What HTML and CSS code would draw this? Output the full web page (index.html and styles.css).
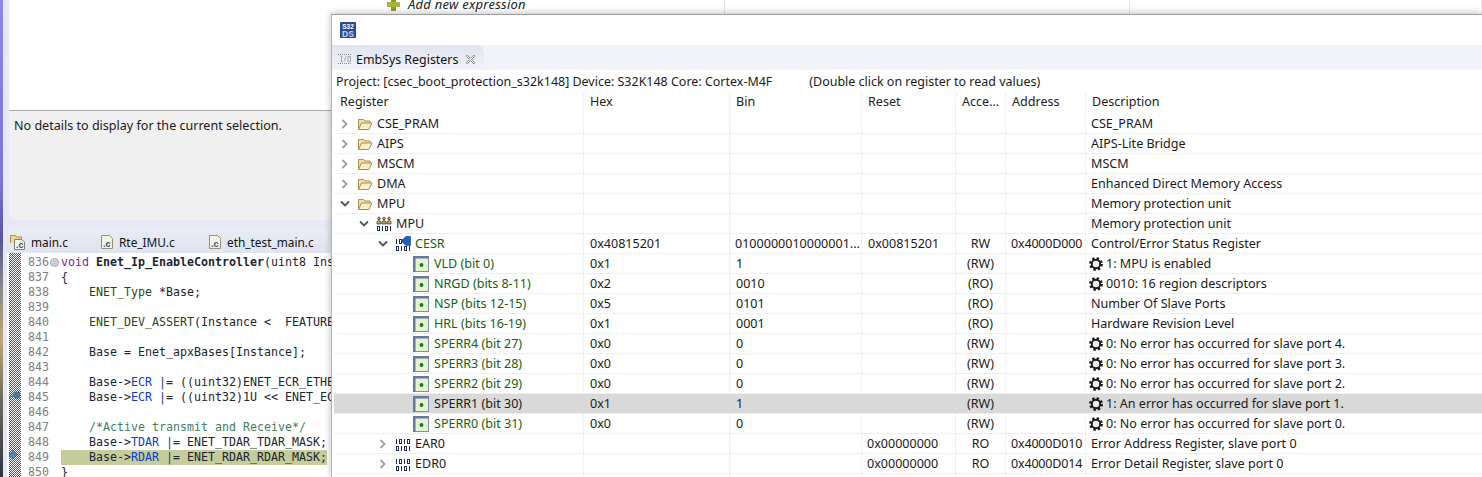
FILE: index.html
```html
<!DOCTYPE html>
<html lang="en">
<head>
<meta charset="utf-8">
<title>EmbSys Registers</title>
<link rel="stylesheet" href="styles.css">
</head>
<body>
<svg class="defs" width="0" height="0" aria-hidden="true">
  <defs>
    <symbol id="folder" viewBox="0 0 16 16">
      <path d="M1.500 13.500V3.500h5l1.500 1.500h5v2" fill="#f3dfa4" stroke="#a98f50"/>
      <path d="M1.500 13.500l3-6.500h10.500l-3 6.500z" fill="#fcefc4" stroke="#a98f50"/>
    </symbol>
    <symbol id="bits" viewBox="0 0 16 16">
      <g fill="#1c2c58">
        <path d="M1 3h1v5H1zM4 3h3v5H4zM5 4v3h1V4zM9 3h1v5H9zM12 3h3v5h-3zM13 4v3h1V4z" fill-rule="evenodd"/>
        <path d="M1 10h3v5H1zM2 11v3h1v-3zM6 10h1v5H6zM9 10h3v5H9zM10 11v3h1v-3zM14 10h1v5h-1z" fill-rule="evenodd"/>
      </g>
    </symbol>
    <symbol id="bits-people" viewBox="0 0 16 16">
      <g fill="#c8a83c" stroke="#1c2c58" stroke-width=".7">
        <circle cx="3" cy="2.500" r="1.300"/><circle cx="8" cy="2.500" r="1.300"/><circle cx="13" cy="2.500" r="1.300"/>
        <path d="M1 8V5.500l2-1 2 1V8zM6 8V5.500l2-1 2 1V8zM11 8V5.500l2-1 2 1V8z"/>
      </g>
      <path d="M1 10h3v5H1zM2 11v3h1v-3zM6 10h1v5H6zM9 10h3v5H9zM10 11v3h1v-3zM14 10h1v5h-1z" fill="#1c2c58" fill-rule="evenodd"/>
    </symbol>
    <symbol id="bits-arrow" viewBox="0 0 16 16">
      <path d="M1 3h1v5H1zM4 3h3v5H4zM5 4v3h1V4z" fill="#1c2c58" fill-rule="evenodd"/>
      <path d="M1 10h3v5H1zM2 11v3h1v-3zM6 10h1v5H6zM9 10h3v5H9zM10 11v3h1v-3zM14 10h1v5h-1z" fill="#1c2c58" fill-rule="evenodd"/>
      <path d="M6 5l5-4.500h4.500v9H11z" fill="#1f5fc0" stroke="#123c88" stroke-width=".6"/>
    </symbol>
    <symbol id="field" viewBox="0 0 16 16">
      <rect x=".5" y=".5" width="15" height="15" fill="#e6f0d2" stroke="#7d8db0"/>
      <path d="M0 0h16v2.500H2.500V16H0z" fill="#66789f"/>
      <circle cx="8.500" cy="9" r="1.900" fill="#0f7a1e"/>
    </symbol>
    <symbol id="gear" viewBox="0 0 14 14">
      <circle cx="7" cy="7" r="5.400" fill="none" stroke="#1a1a1a" stroke-width="3" stroke-dasharray="2.200 2.040"/>
      <circle cx="7" cy="7" r="4.200" fill="none" stroke="#1a1a1a" stroke-width="1.900"/>
      <circle cx="7" cy="7" r="2.900" fill="#ececec"/>
    </symbol>
    <symbol id="cfile" viewBox="0 0 14 16">
      <path d="M1.500 1.500h8l3 3v10h-11z" fill="#f7f3e2" stroke="#9a8f70"/>
      <text x="3" y="12.500" class="cfile-text">.c</text>
    </symbol>
    <symbol id="cfile-open" viewBox="0 0 15 16">
      <path d="M.5 9V1.500h5l1 1.500h5v3" fill="#f0d78c" stroke="#a98f50"/>
      <path d="M4.500 5.500h7l3 2.500v7.500h-10z" fill="#f7f3e2" stroke="#7f7f70"/>
      <text x="6" y="13.500" class="cfile-text">.c</text>
    </symbol>
    <symbol id="chev-r" viewBox="0 0 8 10"><path d="M1.500 1l4 4-4 4" fill="none" stroke="#a0a0a0" stroke-width="1.800"/></symbol>
    <symbol id="chev-d" viewBox="0 0 10 8"><path d="M1 1.500l4 4 4-4" fill="none" stroke="#555" stroke-width="1.800"/></symbol>
  </defs>
</svg>

<div class="desktop">
  <div class="wallpaper"></div>
  <div class="ide-left">
    <div class="blank-pane"></div>
    <div class="details-pane">No details to display for the current selection.</div>
    <div class="editor">
      <div class="editor-tabs">
        <span class="etab etab-main"><svg class="ico-main"><use href="#cfile-open"/></svg>main.c</span>
        <span class="etab etab-rte"><svg class="ico-file"><use href="#cfile"/></svg>Rte_IMU.c</span>
        <span class="etab"><svg class="ico-file"><use href="#cfile"/></svg>eth_test_main.c</span>
      </div>
      <div class="editor-body">
        <div class="ruler">
          <svg class="mark mark-845" viewBox="0 0 12 10"><path d="M0 8l4-3 2-3h4l1 3-1 3H6L4 6z" fill="#4a78a8" stroke="#2d5580" stroke-width=".6"/></svg>
          <svg class="mark mark-849" viewBox="0 0 8 10"><path d="M0 3h3.500V.5L8 5 3.500 9.500V7H0z" fill="#4c86c8" stroke="#29568a" stroke-width=".6"/></svg>
        </div>
        <div class="lines">
          <div class="ln"><span class="no">836</span><span class="fold"></span><span class="code"><span class="kw">void</span> <b>Enet_Ip_EnableController</b>(uint8 Instance)</span></div>
          <div class="ln"><span class="no">837</span><span class="fold-off"></span><span class="code">{</span></div>
          <div class="ln"><span class="no">838</span><span class="fold-off"></span><span class="code">    <span class="ty">ENET_Type</span> *Base;</span></div>
          <div class="ln"><span class="no">839</span><span class="fold-off"></span><span class="code"></span></div>
          <div class="ln"><span class="no">840</span><span class="fold-off"></span><span class="code">    <span class="ty">ENET_DEV_ASSERT</span>(Instance &lt;  FEATURE_ENET_COUNT);</span></div>
          <div class="ln"><span class="no">841</span><span class="fold-off"></span><span class="code"></span></div>
          <div class="ln"><span class="no">842</span><span class="fold-off"></span><span class="code">    Base = Enet_apxBases[Instance];</span></div>
          <div class="ln"><span class="no">843</span><span class="fold-off"></span><span class="code"></span></div>
          <div class="ln"><span class="no">844</span><span class="fold-off"></span><span class="code">    Base-&gt;<span class="mem">ECR</span> <span class="bar">|</span>= ((uint32)ENET_ECR_ETHEREN_MASK);</span></div>
          <div class="ln"><span class="no">845</span><span class="fold-off"></span><span class="code">    Base-&gt;<span class="mem">ECR</span> <span class="bar">|</span>= ((uint32)1U &lt;&lt; ENET_ECR_DBSWP_SHIFT);</span></div>
          <div class="ln"><span class="no">846</span><span class="fold-off"></span><span class="code"></span></div>
          <div class="ln"><span class="no">847</span><span class="fold-off"></span><span class="code">    <span class="cm">/*Active transmit and Receive*/</span></span></div>
          <div class="ln"><span class="no">848</span><span class="fold-off"></span><span class="code">    Base-&gt;<span class="mem">TDAR</span> <span class="bar">|</span>= ENET_TDAR_TDAR_MASK;</span></div>
          <div class="ln"><span class="no">849</span><span class="fold-off"></span><span class="code code-hit">    Base-&gt;<span class="mem">RDAR</span> <span class="bar">|</span>= ENET_RDAR_RDAR_MASK;</span></div>
          <div class="ln"><span class="no">850</span><span class="fold-off"></span><span class="code">}</span></div>
        </div>
      </div>
    </div>
  </div>
  <div class="ide-right">
    <div class="expr-row">
      <div class="expr-cell expr-name"><span class="expr-plus"></span><em>Add new expression</em></div>
      <div class="expr-cell expr-mid"></div>
      <div class="expr-cell"></div>
    </div>
  </div>

  <section class="window">
    <div class="win-title">
      <svg class="s32" viewBox="0 0 16 16"><rect width="16" height="16" rx="1" fill="#2d4b95"/><text x="8" y="7" class="s32-a">S32</text><text x="8" y="14.500" class="s32-b">DS</text></svg>
    </div>
    <div class="tabbar">
      <div class="tab">
        <svg class="tab-ico" viewBox="0 0 14 10"><path d="M0 .5h14M0 9.500h14" stroke="#888" stroke-dasharray="1 1"/><path d="M2.500 2.500h2M3.500 2.500v5M2.500 7.500h2M6 7.500L8 2.500M10 2.500h2.500v5H10z" fill="none" stroke="#aaa"/></svg>
        <span>EmbSys Registers</span>
        <svg class="tab-x" viewBox="0 0 10 10"><path d="M1 2l1-1 3 3 3-3 1 1-3 3 3 3-1 1-3-3-3 3-1-1 3-3z" fill="#fff" stroke="#777" stroke-width=".8"/></svg>
      </div>
    </div>
    <div class="project"><span>Project: [csec_boot_protection_s32k148] Device: S32K148 Core: Cortex-M4F</span><span>(Double click on register to read values)</span></div>

    <div class="table">
      <div class="tr thead"><div>Register</div><div>Hex</div><div>Bin</div><div>Reset</div><div>Acce...</div><div>Address</div><div>Description</div></div>

      <div class="tr"><div class="tree d0"><svg class="chev"><use href="#chev-r"/></svg><svg class="ico"><use href="#folder"/></svg>CSE_PRAM</div><div></div><div></div><div></div><div></div><div></div><div>CSE_PRAM</div></div>
      <div class="tr"><div class="tree d0"><svg class="chev"><use href="#chev-r"/></svg><svg class="ico"><use href="#folder"/></svg>AIPS</div><div></div><div></div><div></div><div></div><div></div><div>AIPS-Lite Bridge</div></div>
      <div class="tr"><div class="tree d0"><svg class="chev"><use href="#chev-r"/></svg><svg class="ico"><use href="#folder"/></svg>MSCM</div><div></div><div></div><div></div><div></div><div></div><div>MSCM</div></div>
      <div class="tr"><div class="tree d0"><svg class="chev"><use href="#chev-r"/></svg><svg class="ico"><use href="#folder"/></svg>DMA</div><div></div><div></div><div></div><div></div><div></div><div>Enhanced Direct Memory Access</div></div>
      <div class="tr"><div class="tree d0"><svg class="chev"><use href="#chev-d"/></svg><svg class="ico"><use href="#folder"/></svg>MPU</div><div></div><div></div><div></div><div></div><div></div><div>Memory protection unit</div></div>
      <div class="tr"><div class="tree d1"><svg class="chev"><use href="#chev-d"/></svg><svg class="ico"><use href="#bits-people"/></svg>MPU</div><div></div><div></div><div></div><div></div><div></div><div>Memory protection unit</div></div>
      <div class="tr"><div class="tree d2 reg"><svg class="chev"><use href="#chev-d"/></svg><svg class="ico"><use href="#bits-arrow"/></svg>CESR</div><div>0x40815201</div><div class="tight">0100000010000001...</div><div>0x00815201</div><div class="mid">RW</div><div class="addr">0x4000D000</div><div>Control/Error Status Register</div></div>

      <div class="tr"><div class="tree d3 reg"><svg class="ico"><use href="#field"/></svg>VLD (bit 0)</div><div>0x1</div><div>1</div><div></div><div class="mid">(RW)</div><div></div><div class="desc"><svg class="gear"><use href="#gear"/></svg>1: MPU is enabled</div></div>
      <div class="tr"><div class="tree d3 reg"><svg class="ico"><use href="#field"/></svg>NRGD (bits 8-11)</div><div>0x2</div><div>0010</div><div></div><div class="mid">(RO)</div><div></div><div class="desc"><svg class="gear"><use href="#gear"/></svg>0010: 16 region descriptors</div></div>
      <div class="tr"><div class="tree d3 reg"><svg class="ico"><use href="#field"/></svg>NSP (bits 12-15)</div><div>0x5</div><div>0101</div><div></div><div class="mid">(RO)</div><div></div><div>Number Of Slave Ports</div></div>
      <div class="tr"><div class="tree d3 reg"><svg class="ico"><use href="#field"/></svg>HRL (bits 16-19)</div><div>0x1</div><div>0001</div><div></div><div class="mid">(RO)</div><div></div><div>Hardware Revision Level</div></div>
      <div class="tr"><div class="tree d3 reg"><svg class="ico"><use href="#field"/></svg>SPERR4 (bit 27)</div><div>0x0</div><div>0</div><div></div><div class="mid">(RW)</div><div></div><div class="desc"><svg class="gear"><use href="#gear"/></svg>0: No error has occurred for slave port 4.</div></div>
      <div class="tr"><div class="tree d3 reg"><svg class="ico"><use href="#field"/></svg>SPERR3 (bit 28)</div><div>0x0</div><div>0</div><div></div><div class="mid">(RW)</div><div></div><div class="desc"><svg class="gear"><use href="#gear"/></svg>0: No error has occurred for slave port 3.</div></div>
      <div class="tr"><div class="tree d3 reg"><svg class="ico"><use href="#field"/></svg>SPERR2 (bit 29)</div><div>0x0</div><div>0</div><div></div><div class="mid">(RW)</div><div></div><div class="desc"><svg class="gear"><use href="#gear"/></svg>0: No error has occurred for slave port 2.</div></div>
      <div class="tr selected"><div class="tree d3"><svg class="ico"><use href="#field"/></svg>SPERR1 (bit 30)</div><div>0x1</div><div>1</div><div></div><div class="mid">(RW)</div><div></div><div class="desc"><svg class="gear"><use href="#gear"/></svg>1: An error has occurred for slave port 1.</div></div>
      <div class="tr"><div class="tree d3 reg"><svg class="ico"><use href="#field"/></svg>SPERR0 (bit 31)</div><div>0x0</div><div>0</div><div></div><div class="mid">(RW)</div><div></div><div class="desc"><svg class="gear"><use href="#gear"/></svg>0: No error has occurred for slave port 0.</div></div>

      <div class="tr"><div class="tree d2"><svg class="chev"><use href="#chev-r"/></svg><svg class="ico"><use href="#bits"/></svg>EAR0</div><div></div><div></div><div class="tight">0x00000000</div><div class="mid">RO</div><div class="addr">0x4000D010</div><div>Error Address Register, slave port 0</div></div>
      <div class="tr"><div class="tree d2"><svg class="chev"><use href="#chev-r"/></svg><svg class="ico"><use href="#bits"/></svg>EDR0</div><div></div><div></div><div class="tight">0x00000000</div><div class="mid">RO</div><div class="addr">0x4000D014</div><div>Error Detail Register, slave port 0</div></div>
      <div class="tr"><div></div><div></div><div></div><div></div><div></div><div></div><div></div></div>
    </div>
  </section>
</div>
</body>
</html>
```
FILE: styles.css
```css
* { box-sizing: border-box; }
html, body { margin: 0; padding: 0; }
body {
  width: 1482px;
  height: 477px;
  overflow: hidden;
  font-family: "Noto Sans", "Noto Sans CJK SC", sans-serif;
  font-size: 12.55px;
  color: #1a1a1a;
}
.defs { position: absolute; }

.desktop {
  position: relative;
  display: flex;
  width: 1482px;
  height: 477px;
  background: #e6e8f6;
  overflow: hidden;
}
.wallpaper {
  flex: none;
  width: 3px;
  background: linear-gradient(#8f86ea 0, #7d74d8 180px, #58569c 240px, #8c8a86 290px, #c0a57a 340px, #6c6a60 400px, #30343e 477px);
}

.ide-left {
  flex: none;
  width: 357px;
  padding-left: 6px;
  display: flex;
  flex-direction: column;
}
.blank-pane {
  flex: none;
  height: 111px;
  background: #fff;
  border-bottom: 1px solid #a8a8a8;
}
.details-pane {
  flex: none;
  height: 109px;
  padding: 7px 0 0 5px;
  background: #f0f0f0;
  line-height: 16px;
  border-radius: 0 0 0 6px;
}

.editor {
  margin-top: 8px;
  margin-left: -2px;
  flex: 1;
  min-height: 0;
  display: flex;
  flex-direction: column;
}
.editor-tabs {
  flex: none;
  height: 25px;
  display: flex;
  align-items: center;
  padding: 2px 0 0 3px;
  background: linear-gradient(#e9ecf4, #dfe4f0);
  border-radius: 7px 0 0 0;
  color: #111;
  font-size: 11.85px;
}
.etab { display: flex; align-items: center; gap: 5px; }
.etab-main { width: 90px; gap: 6px; }
.etab-rte { width: 108px; }
.ico-file { width: 14px; height: 16px; }
.ico-main { width: 15px; height: 16px; }
.cfile-text { font: bold 9px "Liberation Sans", sans-serif; fill: #2a4a90; }

.editor-body {
  flex: 1;
  min-height: 0;
  display: flex;
  background: #fff;
  padding-left: 2px;
}
.ruler {
  position: relative;
  flex: none;
  width: 12px;
  background-color: #fff;
  background-image: conic-gradient(#1d5fa8 25%, #fff 0 50%, #1d5fa8 0 75%, #fff 0);
  background-size: 2px 2px;
}
.mark { position: absolute; left: 0; }
.mark-845 { top: 137px; width: 12px; height: 10px; }
.mark-849 { top: 197px; width: 8px; height: 10px; }

.lines {
  flex: 1;
  padding-top: 2px;
  font-family: "DejaVu Sans Mono", "Liberation Mono", monospace;
  font-size: 11.63px;
  min-width: 0;
}
.ln { display: flex; height: 15px; line-height: 15px; white-space: pre; }
.no { flex: none; width: 28px; text-align: right; color: #808080; }
.fold {
  flex: none;
  width: 9px; height: 9px;
  margin: 3px 2px 0 1px;
  border-radius: 50%;
  background: #c6cad0;
  border: 1px solid #a4a8b0;
  box-shadow: inset 0 0 0 1px #dde;
}
.fold-off { flex: none; width: 12px; }
.code { flex: 1; color: #1c2430; }
.code-hit { background: #c6cd9c; flex: none; width: 266px; }
.kw { color: #7f1f8f; }
.ty { color: #1c4a1c; }
.mem { color: #0d3cc8; }
.cm { color: #3f7f5f; }
.bar { color: #2a3a70; }

.ide-right { flex: 1; min-width: 0; background: #fff; }
.expr-row { display: flex; height: 16px; }
.expr-cell { width: 352px; border-right: 1px solid #e4e4e4; }
.expr-name { width: 365px; display: flex; align-items: center; gap: 8px; padding: 0 0 8px 27px; font-size: 13px; letter-spacing: .25px; color: #222; }
.expr-mid { width: 406px; }
.expr-plus {
  width: 13px; height: 13px;
  background:
    linear-gradient(#a8b43c, #a8b43c) center / 13px 5px no-repeat,
    linear-gradient(#8f9c2c, #8f9c2c) center / 5px 13px no-repeat;
}

.window {
  position: absolute;
  left: 331px;
  top: 14px;
  width: 1151px;
  height: 463px;
  background: #fff;
  border-top: 1px solid #9c9c9c;
  border-left: 1px solid #b4b4b4;
  box-shadow: 0 -3px 6px rgba(0,0,0,.12), -2px 0 5px rgba(0,0,0,.1);
}
.win-title { height: 30px; padding: 7px 0 0 8px; }
.s32 { display: block; width: 16px; height: 16px; }
.s32-a { font: bold 6.500px "Liberation Sans", sans-serif; fill: #fff; text-anchor: middle; }
.s32-b { font: bold 8.500px "Liberation Sans", sans-serif; fill: #c8d4f0; text-anchor: middle; }

.tabbar { height: 25px; background: #f2f3f9; }
.tab {
  width: 152px;
  height: 25px;
  display: flex;
  align-items: center;
  padding: 3px 0 0 6px;
  background: linear-gradient(#e0e4f0, #f2f3f9);
  border-radius: 0 8px 0 0;
  color: #111;
  font-size: 12.4px;
}
.tab-ico { width: 14px; height: 10px; margin-right: 4px; }
.tab-x { width: 11px; height: 11px; margin-left: 7px; }

.project {
  display: flex;
  gap: 37px;
  height: 20px;
  align-items: center;
  padding: 2px 0 0 4px;
  font-size: 12.47px;
}

.table { margin-left: 2px; padding-top: 2px; }
.tr {
  display: grid;
  grid-template-columns: 250px 146px 132px 94px 50px 80px 1fr;
  height: 20px;
  line-height: 19px;
  border-bottom: 1px solid #efefef;
  white-space: nowrap;
}
.tr > div {
  padding-left: 6px;
  border-right: 1px solid #efefef;
  overflow: hidden;
}
.tr > div:last-child { border-right: 0; padding-left: 5px; }
.thead { height: 22px; line-height: 20px; border-bottom: 0; color: #222; }
.thead > div { padding-left: 6px; }
.thead > div:last-child { padding-left: 6px; }
.selected { background: #d9d9d9; }
.selected > div { border-right-color: #d9d9d9; }
.mid { text-align: center; padding-left: 0 !important; }
.tight, .addr { padding-left: 5px !important; }
.addr { letter-spacing: -.2px; }
.tr > .tree { display: flex; align-items: center; }
.tree.d0 { padding-left: 6px; }
.tree.d1 { padding-left: 25px; }
.tree.d2 { padding-left: 44px; }
.tree.d3 { padding-left: 79px; }
.chev { flex: none; width: 10px; height: 10px; margin-right: 7px; }
.ico { flex: none; width: 16px; height: 16px; margin-right: 4px; }
.d3 .ico { margin-right: 5px; }
.reg { color: #14620f; }
.desc { display: flex; align-items: center; }
.gear { flex: none; width: 14px; height: 14px; margin-right: 3px; margin-left: -2px; }
```
